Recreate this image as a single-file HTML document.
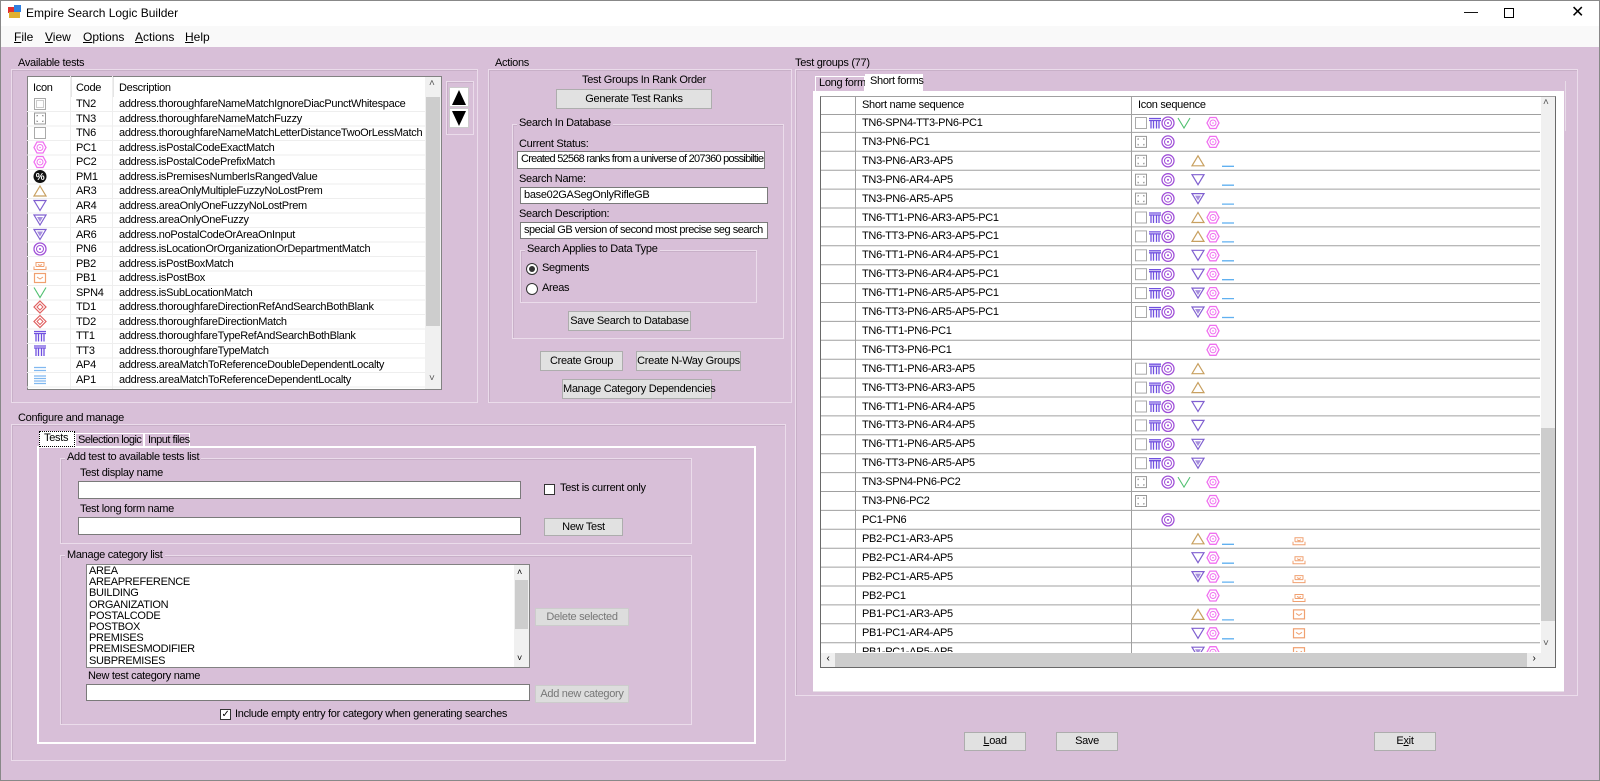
<!DOCTYPE html>
<html><head><meta charset="utf-8"><style>
*{box-sizing:border-box;margin:0;padding:0}
body{width:1600px;height:781px;background:#d8bfd8;font-family:"Liberation Sans",sans-serif;font-size:11px;letter-spacing:-0.3px;color:#000;position:relative;overflow:hidden}
.a{position:absolute}
.gb{position:absolute;border:1px solid #ebdceb;box-shadow:inset 1px 1px 0 #c8b0c8}
.gl{position:absolute;background:#d8bfd8;padding:0 2px;white-space:nowrap}
.btn{position:absolute;background:#e1e1e1;border:1px solid #adadad;text-align:center;white-space:nowrap}
.tb{position:absolute;background:#fff;border:1px solid #7a7a7a;padding:1px 3px;white-space:nowrap;overflow:hidden}
.t{position:absolute;white-space:nowrap}
</style></head><body>
<svg width="0" height="0" style="position:absolute">
<defs>
<symbol id="tn2" viewBox="0 0 14 14"><rect x="1.5" y="1.5" width="11" height="11" fill="none" stroke="#aaa"/><rect x="3.5" y="3.5" width="7" height="7" fill="none" stroke="#ccc"/></symbol>
<symbol id="tn3" viewBox="0 0 14 14"><rect x="1.5" y="1.5" width="11" height="11" fill="none" stroke="#999"/><path d="M4 5V4h1M9 4h1v1M10 9v1H9M5 10H4V9" fill="none" stroke="#999"/></symbol>
<symbol id="tn6" viewBox="0 0 14 14"><rect x="1.5" y="1.5" width="11" height="11" fill="none" stroke="#aaa"/></symbol>
<symbol id="pc" viewBox="0 0 14 14"><path d="M4 1.5h6l3 5.5-3 5.5H4L1 7z" fill="none" stroke="#f070f0" stroke-width="1.3"/><circle cx="7" cy="7" r="3" fill="none" stroke="#f070f0"/><circle cx="7" cy="7" r=".8" fill="#f070f0"/></symbol>
<symbol id="pn" viewBox="0 0 14 14"><circle cx="7" cy="7" r="6" fill="none" stroke="#a050d8" stroke-width="1.3"/><circle cx="7" cy="7" r="3.5" fill="none" stroke="#a050d8"/><circle cx="7" cy="7" r="1" fill="#a050d8"/></symbol>
<symbol id="pm" viewBox="0 0 14 14"><circle cx="7" cy="7" r="6.5" fill="#111"/><text x="7" y="10.5" font-size="10" font-weight="bold" fill="#fff" text-anchor="middle" font-family="Liberation Sans">%</text></symbol>
<symbol id="ar3" viewBox="0 0 14 14"><path d="M7 2L13 12H1z" fill="none" stroke="#c8a060" stroke-width="1.2"/></symbol>
<symbol id="ar4" viewBox="0 0 14 14"><path d="M1 2H13L7 12z" fill="none" stroke="#8060d0" stroke-width="1.2"/></symbol>
<symbol id="ar5" viewBox="0 0 14 14"><path d="M1 2H13L7 12z" fill="none" stroke="#8060d0" stroke-width="1.2"/><path d="M4 4H10L7 9z" fill="#8060d0" opacity=".7"/></symbol>
<symbol id="spn" viewBox="0 0 14 14"><path d="M1 2L7 12 13 2" fill="none" stroke="#50c070" stroke-width="1.1"/></symbol>
<symbol id="tt" viewBox="0 0 14 14"><path d="M1 2.5h12M1 4.5h12M3 4.5v8M5.5 4.5v8M8.5 4.5v8M11 4.5v8" fill="none" stroke="#7050e0" stroke-width="1.3"/></symbol>
<symbol id="ap" viewBox="0 0 14 14"><path d="M1 12.5h12" stroke="#60b0f0" stroke-width="1.3"/></symbol>
<symbol id="ap4" viewBox="0 0 14 14"><path d="M1 9.5h12M1 12.5h12" stroke="#80b8f0" stroke-width="1.3"/></symbol>
<symbol id="ap1" viewBox="0 0 14 14"><path d="M1 3.5h12M1 6h12M1 8.5h12M1 11h12" stroke="#80b8f0" stroke-width="1.3"/></symbol>
<symbol id="pb2" viewBox="0 0 14 14"><path d="M1 10v3h12v-3M3 10V6h8v4M3 10h8M5 8l2 1 2-1" fill="none" stroke="#f0a070"/></symbol>
<symbol id="pb1" viewBox="0 0 14 14"><rect x="1.5" y="2.5" width="11" height="9" fill="none" stroke="#f0a070" stroke-width="1.2"/><path d="M4 6l3 2 3-2" fill="none" stroke="#f0a070"/></symbol>
<symbol id="td" viewBox="0 0 14 14"><path d="M7 1l6 6-6 6-6-6z" fill="none" stroke="#e06060" stroke-width="1.2"/><path d="M7 4l3 3-3 3-3-3z" fill="none" stroke="#e06060"/></symbol>
</defs></svg>

<div class="a" style="left:0;top:0;width:1600px;height:26px;background:#fff;border:1px solid #888;border-bottom:none"></div>
<div class="a" style="left:8px;top:7px;width:6px;height:6px;background:#e03030"></div><div class="a" style="left:14px;top:5px;width:7px;height:7px;background:#3080e0"></div><div class="a" style="left:9px;top:12px;width:11px;height:6px;background:#e0b030"></div>
<div class="t" style="left:26px;top:6px;font-size:12px;letter-spacing:0">Empire Search Logic Builder</div>
<div class="t" style="left:1464px;top:3px;font-size:14px">—</div>
<div class="a" style="left:1504px;top:8px;width:10px;height:10px;border:1px solid #000"></div>
<div class="t" style="left:1571px;top:2px;font-size:16px">✕</div>
<div class="a" style="left:0;top:26px;width:1600px;height:21px;background:#f9f9f9"></div>
<div class="t" style="left:14px;top:30px;font-size:12px;letter-spacing:0"><u>F</u>ile</div>
<div class="t" style="left:45px;top:30px;font-size:12px;letter-spacing:0"><u>V</u>iew</div>
<div class="t" style="left:83px;top:30px;font-size:12px;letter-spacing:0"><u>O</u>ptions</div>
<div class="t" style="left:135px;top:30px;font-size:12px;letter-spacing:0"><u>A</u>ctions</div>
<div class="t" style="left:185px;top:30px;font-size:12px;letter-spacing:0"><u>H</u>elp</div>

<div class="gb" style="left:11px;top:69px;width:467px;height:334px"></div>
<div class="gl" style="left:16px;top:57px">Available tests</div>
<div class="a" style="left:27px;top:76px;width:415px;height:314px;background:#fff;border:1px solid #828282;overflow:hidden">
 <div class="t" style="left:5px;top:5px">Icon</div><div class="t" style="left:48px;top:5px">Code</div><div class="t" style="left:91px;top:5px">Description</div>
 <div class="a" style="left:43px;top:0;width:1px;height:20px;background:#e5e5e5"></div><div class="a" style="left:85px;top:0;width:1px;height:20px;background:#e5e5e5"></div>
 <div class="a" style="left:397px;top:0;width:16px;height:312px;background:#f0f0f0"></div>
 <div class="a" style="left:398px;top:20px;width:14px;height:229px;background:#cdcdcd"></div>
 <div class="t" style="left:401px;top:1px;font-size:10px;color:#555">˄</div>
 <div class="t" style="left:401px;top:296px;font-size:10px;color:#555">˅</div>
</div>
<div class="gb" style="left:446px;top:81px;width:28px;height:54px"></div>
<div class="btn" style="left:449px;top:87px;width:20px;height:20px;background:#fff;border-color:#ccc"></div>
<div class="btn" style="left:449px;top:108px;width:20px;height:20px;background:#fff;border-color:#ccc"></div>
<svg class="a" style="left:451px;top:89px" width="16" height="38"><path d="M8 1L15 16H1z M1 22H15L8 37z" fill="#000"/></svg>

<div class="gb" style="left:488px;top:69px;width:304px;height:334px"></div>
<div class="gl" style="left:493px;top:57px">Actions</div>
<div class="t" style="left:582px;top:74px">Test Groups In Rank Order</div>
<div class="btn" style="left:556px;top:89px;width:156px;height:20px;line-height:18px">Generate Test Ranks</div>
<div class="gb" style="left:512px;top:124px;width:272px;height:215px"></div>
<div class="gl" style="left:517px;top:117px">Search In Database</div>
<div class="t" style="left:519px;top:138px">Current Status:</div>
<div class="tb" style="left:517px;top:151px;width:248px;height:18px;letter-spacing:-0.75px">Created 52568 ranks from a universe of 207360 possibilties</div>
<div class="t" style="left:519px;top:173px">Search Name:</div>
<div class="tb" style="left:520px;top:187px;width:248px;height:17px">base02GASegOnlyRifleGB</div>
<div class="t" style="left:519px;top:208px">Search Description:</div>
<div class="tb" style="left:520px;top:222px;width:248px;height:17px;letter-spacing:-0.5px">special GB version of second most precise seg search</div>
<div class="gb" style="left:520px;top:250px;width:237px;height:53px"></div>
<div class="gl" style="left:525px;top:243px">Search Applies to Data Type</div>
<div class="a" style="left:526px;top:263px;width:12px;height:12px;border:1px solid #333;border-radius:50%;background:#fff"></div><div class="a" style="left:529px;top:266px;width:6px;height:6px;border-radius:50%;background:#333"></div>
<div class="t" style="left:542px;top:262px">Segments</div>
<div class="a" style="left:526px;top:283px;width:12px;height:12px;border:1px solid #333;border-radius:50%;background:#fff"></div>
<div class="t" style="left:542px;top:282px">Areas</div>
<div class="btn" style="left:568px;top:311px;width:123px;height:20px;line-height:18px">Save Search to Database</div>
<div class="btn" style="left:540px;top:351px;width:83px;height:20px;line-height:18px">Create Group</div>
<div class="btn" style="left:636px;top:351px;width:105px;height:20px;line-height:18px">Create N-Way Groups</div>
<div class="btn" style="left:562px;top:379px;width:150px;height:20px;line-height:18px">Manage Category Dependencies</div>

<div class="gb" style="left:11px;top:424px;width:775px;height:337px"></div>
<div class="gl" style="left:16px;top:412px">Configure and manage</div>
<div class="a" style="left:37px;top:446px;width:719px;height:298px;background:#fff;padding:2px"><div style="width:100%;height:100%;background:#d8bfd8"></div></div>
<div class="a" style="left:39px;top:431px;width:36px;height:16px;background:#fff;border:1px dotted #000"></div><div class="t" style="left:44px;top:432px">Tests</div>
<div class="a" style="left:75px;top:433px;width:69px;height:14px;border:1px solid #fff;border-bottom:none"></div><div class="t" style="left:78px;top:434px;letter-spacing:-0.5px">Selection logic</div>
<div class="a" style="left:144px;top:433px;width:46px;height:14px;border:1px solid #fff;border-bottom:none"></div><div class="t" style="left:148px;top:434px;letter-spacing:-0.5px">Input files</div>
<div class="gb" style="left:60px;top:458px;width:632px;height:86px"></div>
<div class="gl" style="left:65px;top:451px">Add test to available tests list</div>
<div class="t" style="left:80px;top:467px">Test display name</div>
<div class="tb" style="left:78px;top:481px;width:443px;height:18px"></div>
<div class="a" style="left:544px;top:484px;width:11px;height:11px;border:1px solid #333;background:#fff"></div>
<div class="t" style="left:560px;top:482px">Test is current only</div>
<div class="t" style="left:80px;top:503px">Test long form name</div>
<div class="tb" style="left:78px;top:517px;width:443px;height:18px"></div>
<div class="btn" style="left:544px;top:518px;width:79px;height:18px;line-height:16px">New Test</div>
<div class="gb" style="left:60px;top:555px;width:632px;height:170px"></div>
<div class="gl" style="left:65px;top:549px">Manage category list</div>
<div class="a" style="left:86px;top:564px;width:444px;height:104px;background:#fff;border:1px solid #828282;overflow:hidden;line-height:11.2px;font-size:11px;padding:1px 2px">AREA<br>AREAPREFERENCE<br>BUILDING<br>ORGANIZATION<br>POSTALCODE<br>POSTBOX<br>PREMISES<br>PREMISESMODIFIER<br>SUBPREMISES
 <div class="a" style="left:427px;top:0;width:15px;height:102px;background:#f0f0f0"></div><div class="a" style="left:428px;top:15px;width:13px;height:49px;background:#cdcdcd"></div>
 <div class="t" style="left:430px;top:2px;font-size:9px">˄</div><div class="t" style="left:430px;top:88px;font-size:9px">˅</div>
</div>
<div class="btn" style="left:535px;top:608px;width:94px;height:18px;line-height:16px;color:#777;background:#ddd;border-color:#ccc">Delete selected</div>
<div class="t" style="left:88px;top:670px">New test category name</div>
<div class="tb" style="left:86px;top:684px;width:444px;height:17px"></div>
<div class="btn" style="left:535px;top:685px;width:94px;height:18px;line-height:16px;color:#777;background:#ddd;border-color:#ccc">Add new category</div>
<div class="a" style="left:220px;top:709px;width:11px;height:11px;border:1px solid #333;background:#fff;font-size:10px;line-height:9px;text-align:center">✓</div>
<div class="t" style="left:235px;top:708px">Include empty entry for category when generating searches</div>

<div class="gb" style="left:795px;top:69px;width:783px;height:627px"></div>
<div class="gl" style="left:793px;top:57px">Test groups (77)</div>
<div class="a" style="left:815px;top:76px;width:50px;height:16px;border:1px solid #fff;border-bottom:none"></div><div class="t" style="left:819px;top:77px">Long form</div>
<div class="a" style="left:865px;top:74px;width:58px;height:18px;background:#fff"></div><div class="t" style="left:870px;top:75px">Short forms</div>
<div class="a" style="left:813px;top:91px;width:751px;height:601px;background:#fff;border-bottom:1px solid #e8e0e8"></div>
<div class="a" style="left:1563px;top:81px;width:3px;height:50px;border-right:1px solid #e8dce8"></div>
<div class="a" style="left:820px;top:96px;width:736px;height:572px;border:1px solid #696969;border-top-color:#a0a0a0;overflow:hidden;background:#fff">
 <div class="a" style="left:0;top:0;width:720px;height:18px;border-bottom:1px solid #a0a0a0"></div>
 <div class="a" style="left:34px;top:0;width:1px;height:560px;background:#a0a0a0"></div>
 <div class="a" style="left:310px;top:0;width:1px;height:560px;background:#a0a0a0"></div>
 <div class="t" style="left:41px;top:2px">Short name sequence</div>
 <div class="t" style="left:317px;top:2px">Icon sequence</div>
 <div class="a" style="left:720px;top:0;width:14px;height:556px;background:#f0f0f0"></div>
 <div class="a" style="left:720px;top:331px;width:14px;height:193px;background:#cdcdcd"></div>
 <div class="t" style="left:722px;top:0;font-size:10px;color:#555">˄</div>
 <div class="t" style="left:722px;top:541px;font-size:10px;color:#555">˅</div>
 <div class="a" style="left:0;top:556px;width:734px;height:14px;background:#cdcdcd"></div>
 <div class="a" style="left:0;top:556px;width:14px;height:14px;background:#f0f0f0;font-size:10px;text-align:center">‹</div>
 <div class="a" style="left:706px;top:556px;width:14px;height:14px;background:#f0f0f0;font-size:10px;text-align:center">›</div>
 <div class="a" style="left:720px;top:556px;width:14px;height:14px;background:#f0f0f0"></div>
</div>

<div class="btn" style="left:964px;top:732px;width:62px;height:19px;line-height:17px"><u>L</u>oad</div>
<div class="btn" style="left:1056px;top:732px;width:62px;height:19px;line-height:17px">Save</div>
<div class="btn" style="left:1374px;top:732px;width:62px;height:19px;line-height:17px">E<u>x</u>it</div>
<div class="a" style="left:0;top:780px;width:1600px;height:1px;background:#888"></div>
<div class="a" style="left:0;top:26px;width:1px;height:755px;background:#888"></div>
<div class="a" style="left:1599px;top:26px;width:1px;height:755px;background:#888"></div>

<div class="a" style="left:27px;top:76px;width:398px;height:313px;overflow:hidden">
<div class="t" style="left:49px;top:22px">TN2</div><div class="t" style="left:92px;top:22px">address.thoroughfareNameMatchIgnoreDiacPunctWhitespace</div>
<div class="t" style="left:49px;top:36.5px">TN3</div><div class="t" style="left:92px;top:36.5px">address.thoroughfareNameMatchFuzzy</div>
<div class="t" style="left:49px;top:51px">TN6</div><div class="t" style="left:92px;top:51px">address.thoroughfareNameMatchLetterDistanceTwoOrLessMatch</div>
<div class="t" style="left:49px;top:65.5px">PC1</div><div class="t" style="left:92px;top:65.5px">address.isPostalCodeExactMatch</div>
<div class="t" style="left:49px;top:80px">PC2</div><div class="t" style="left:92px;top:80px">address.isPostalCodePrefixMatch</div>
<div class="t" style="left:49px;top:94.5px">PM1</div><div class="t" style="left:92px;top:94.5px">address.isPremisesNumberIsRangedValue</div>
<div class="t" style="left:49px;top:109px">AR3</div><div class="t" style="left:92px;top:109px">address.areaOnlyMultipleFuzzyNoLostPrem</div>
<div class="t" style="left:49px;top:123.5px">AR4</div><div class="t" style="left:92px;top:123.5px">address.areaOnlyOneFuzzyNoLostPrem</div>
<div class="t" style="left:49px;top:138px">AR5</div><div class="t" style="left:92px;top:138px">address.areaOnlyOneFuzzy</div>
<div class="t" style="left:49px;top:152.5px">AR6</div><div class="t" style="left:92px;top:152.5px">address.noPostalCodeOrAreaOnInput</div>
<div class="t" style="left:49px;top:167px">PN6</div><div class="t" style="left:92px;top:167px">address.isLocationOrOrganizationOrDepartmentMatch</div>
<div class="t" style="left:49px;top:181.5px">PB2</div><div class="t" style="left:92px;top:181.5px">address.isPostBoxMatch</div>
<div class="t" style="left:49px;top:196px">PB1</div><div class="t" style="left:92px;top:196px">address.isPostBox</div>
<div class="t" style="left:49px;top:210.5px">SPN4</div><div class="t" style="left:92px;top:210.5px">address.isSubLocationMatch</div>
<div class="t" style="left:49px;top:225px">TD1</div><div class="t" style="left:92px;top:225px">address.thoroughfareDirectionRefAndSearchBothBlank</div>
<div class="t" style="left:49px;top:239.5px">TD2</div><div class="t" style="left:92px;top:239.5px">address.thoroughfareDirectionMatch</div>
<div class="t" style="left:49px;top:254px">TT1</div><div class="t" style="left:92px;top:254px">address.thoroughfareTypeRefAndSearchBothBlank</div>
<div class="t" style="left:49px;top:268.5px">TT3</div><div class="t" style="left:92px;top:268.5px">address.thoroughfareTypeMatch</div>
<div class="t" style="left:49px;top:283px">AP4</div><div class="t" style="left:92px;top:283px">address.areaMatchToReferenceDoubleDependentLocalty</div>
<div class="t" style="left:49px;top:297.5px">AP1</div><div class="t" style="left:92px;top:297.5px">address.areaMatchToReferenceDependentLocalty</div>
<svg class="a" style="left:0;top:0" width="398" height="313" id="lsv"></svg>
</div>

<div class="a" style="left:821px;top:97px;width:719px;height:555px;overflow:hidden">
<div class="t" style="left:41px;top:20px">TN6-SPN4-TT3-PN6-PC1</div>
<div class="t" style="left:41px;top:38.9px">TN3-PN6-PC1</div>
<div class="t" style="left:41px;top:57.8px">TN3-PN6-AR3-AP5</div>
<div class="t" style="left:41px;top:76.7px">TN3-PN6-AR4-AP5</div>
<div class="t" style="left:41px;top:95.6px">TN3-PN6-AR5-AP5</div>
<div class="t" style="left:41px;top:114.5px">TN6-TT1-PN6-AR3-AP5-PC1</div>
<div class="t" style="left:41px;top:133.4px">TN6-TT3-PN6-AR3-AP5-PC1</div>
<div class="t" style="left:41px;top:152.3px">TN6-TT1-PN6-AR4-AP5-PC1</div>
<div class="t" style="left:41px;top:171.2px">TN6-TT3-PN6-AR4-AP5-PC1</div>
<div class="t" style="left:41px;top:190.1px">TN6-TT1-PN6-AR5-AP5-PC1</div>
<div class="t" style="left:41px;top:209px">TN6-TT3-PN6-AR5-AP5-PC1</div>
<div class="t" style="left:41px;top:227.9px">TN6-TT1-PN6-PC1</div>
<div class="t" style="left:41px;top:246.8px">TN6-TT3-PN6-PC1</div>
<div class="t" style="left:41px;top:265.7px">TN6-TT1-PN6-AR3-AP5</div>
<div class="t" style="left:41px;top:284.6px">TN6-TT3-PN6-AR3-AP5</div>
<div class="t" style="left:41px;top:303.5px">TN6-TT1-PN6-AR4-AP5</div>
<div class="t" style="left:41px;top:322.4px">TN6-TT3-PN6-AR4-AP5</div>
<div class="t" style="left:41px;top:341.3px">TN6-TT1-PN6-AR5-AP5</div>
<div class="t" style="left:41px;top:360.2px">TN6-TT3-PN6-AR5-AP5</div>
<div class="t" style="left:41px;top:379.1px">TN3-SPN4-PN6-PC2</div>
<div class="t" style="left:41px;top:398px">TN3-PN6-PC2</div>
<div class="t" style="left:41px;top:416.9px">PC1-PN6</div>
<div class="t" style="left:41px;top:435.8px">PB2-PC1-AR3-AP5</div>
<div class="t" style="left:41px;top:454.7px">PB2-PC1-AR4-AP5</div>
<div class="t" style="left:41px;top:473.6px">PB2-PC1-AR5-AP5</div>
<div class="t" style="left:41px;top:492.5px">PB2-PC1</div>
<div class="t" style="left:41px;top:511.4px">PB1-PC1-AR3-AP5</div>
<div class="t" style="left:41px;top:530.3px">PB1-PC1-AR4-AP5</div>
<div class="t" style="left:41px;top:549.2px">PB1-PC1-AR5-AP5</div>
<svg class="a" style="left:0;top:0" width="719" height="555" id="gsv"></svg>
</div>

<script>
var NS="http://www.w3.org/2000/svg";
function use(svg,id,x,y){var u=document.createElementNS(NS,"use");u.setAttribute("href","#"+id);u.setAttribute("x",x);u.setAttribute("y",y);u.setAttribute("width",14);u.setAttribute("height",14);svg.appendChild(u);}
function line(svg,x1,y1,x2,y2,c){var l=document.createElementNS(NS,"line");l.setAttribute("x1",x1);l.setAttribute("y1",y1);l.setAttribute("x2",x2);l.setAttribute("y2",y2);l.setAttribute("stroke",c);svg.appendChild(l);}
var ls=document.getElementById("lsv");
var li=["tn2","tn3","tn6","pc","pc","pm","ar3","ar4","ar5","ar5","pn","pb2","pb1","spn","td","td","tt","tt","ap4","ap1"];
for(var i=0;i<20;i++){var y=21+i*14.5;line(ls,0,y+14.5,398,y+14.5,"#eeeeee");use(ls,li[i],6,y);}
line(ls,43.5,0,43.5,313,"#eeeeee");line(ls,85.5,0,85.5,313,"#eeeeee");
var gs=document.getElementById("gsv");
var X={tn:313,tt:327,pn:340,spn:356,ar:370,pc:385,ap:400,pb:471};
var R=[
["tn6","tt","pn","spn","pc"],["tn3","pn","pc"],["tn3","pn","ar3","ap"],["tn3","pn","ar4","ap"],["tn3","pn","ar5","ap"],
["tn6","tt","pn","ar3","pc","ap"],["tn6","tt","pn","ar3","pc","ap"],["tn6","tt","pn","ar4","pc","ap"],["tn6","tt","pn","ar4","pc","ap"],["tn6","tt","pn","ar5","pc","ap"],["tn6","tt","pn","ar5","pc","ap"],
["pc"],["pc"],["tn6","tt","pn","ar3"],["tn6","tt","pn","ar3"],["tn6","tt","pn","ar4"],["tn6","tt","pn","ar4"],["tn6","tt","pn","ar5"],["tn6","tt","pn","ar5"],
["tn3","pn","spn","pc"],["tn3","pc"],["pn"],
["ar3","pc","ap","pb2"],["ar4","pc","ap","pb2"],["ar5","pc","ap","pb2"],["pc","pb2"],["ar3","pc","ap","pb1"],["ar4","pc","ap","pb1"],["ar5","pc","ap","pb1"]];
for(var r=0;r<R.length;r++){var y=17+r*18.9;
 line(gs,0,y+18.4,719,y+18.4,"#a0a0a0");
 R[r].forEach(function(k){var key=k.replace(/[0-9]/g,"");if(k=="tn3"||k=="tn6")key="tn";if(k=="pb1"||k=="pb2")key="pb";if(k.indexOf("ar")==0)key="ar";
  use(gs,k,X[key],y+2);});
}
line(gs,34.5,0,34.5,555,"#a0a0a0");line(gs,310.5,0,310.5,555,"#a0a0a0");
</script>
</body></html>
